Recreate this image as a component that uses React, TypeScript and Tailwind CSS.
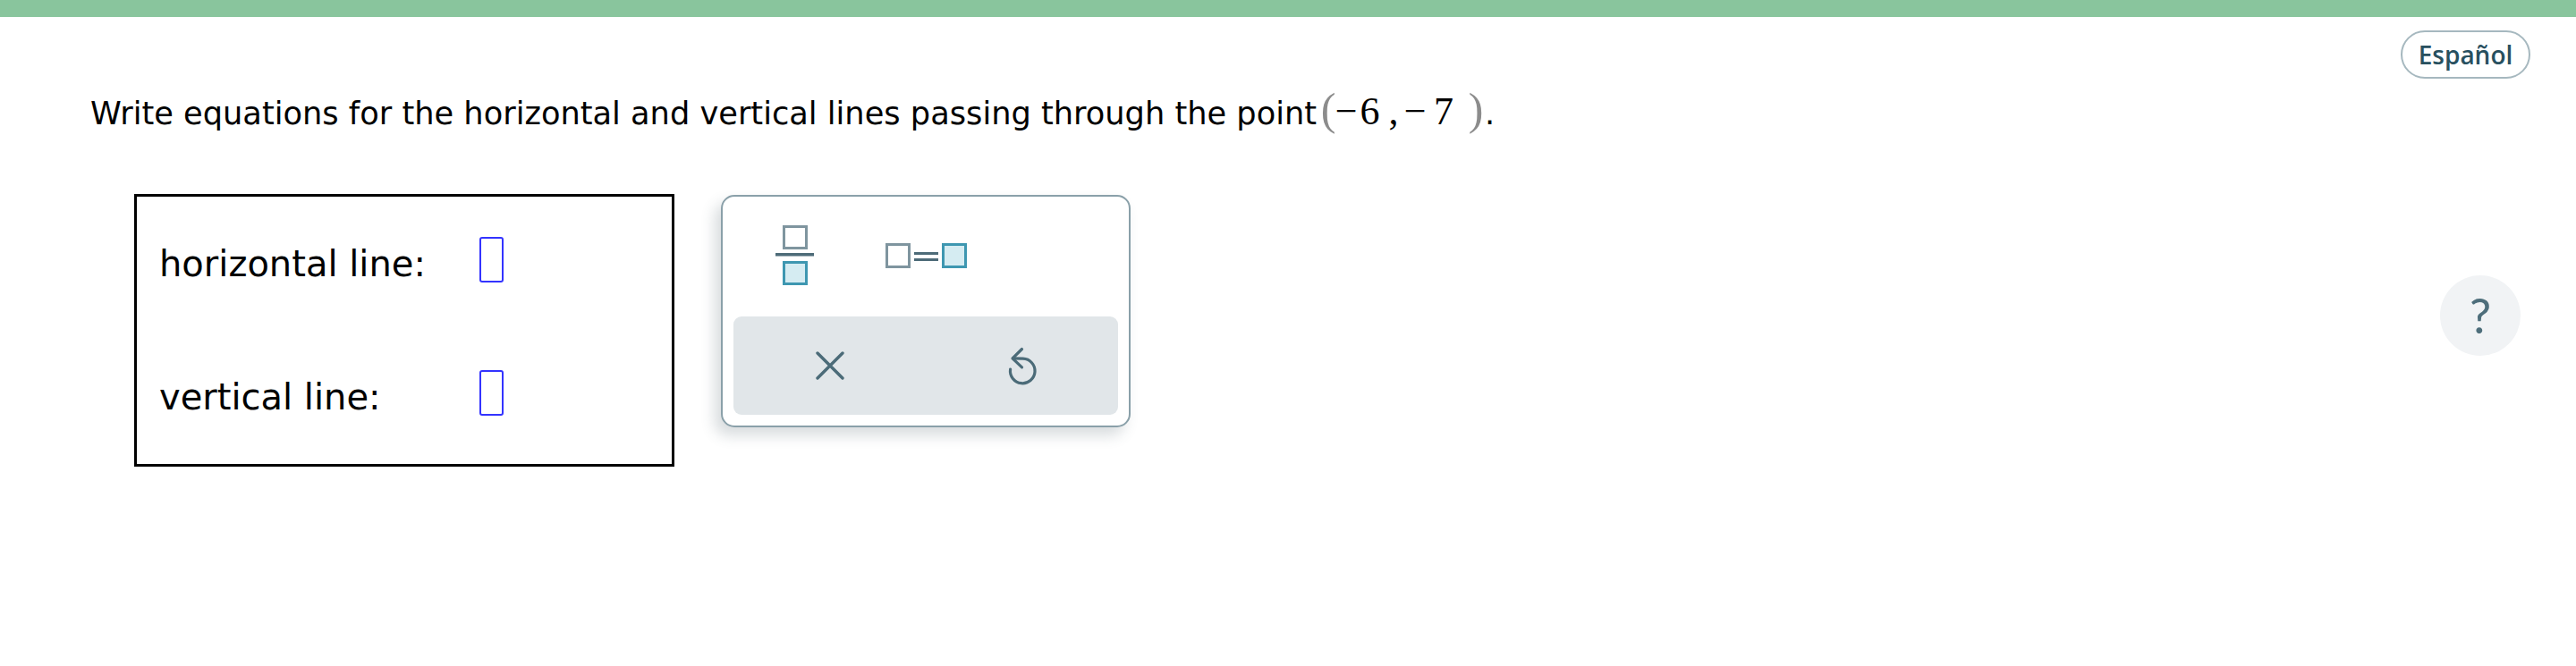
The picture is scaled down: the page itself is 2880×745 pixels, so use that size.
import React from "react";

const slate = "#4b6b78";
const MINUS = "\u2212";

function FractionIcon() {
  return (
    <svg width="43" height="67" viewBox="0 0 43 67">
      <rect x="9.5" y="1.5" width="25" height="24" fill="#ffffff" stroke="#7f959f" strokeWidth="3" />
      <rect x="0" y="31" width="43" height="3.5" fill="#4d6b78" />
      <rect x="9.5" y="41.5" width="25" height="24" fill="#d5ecf2" stroke="#3e97b1" strokeWidth="3" />
    </svg>
  );
}

function EqualsIcon() {
  return (
    <svg width="91" height="28" viewBox="0 0 91 28">
      <rect x="1.5" y="1.5" width="25" height="25" fill="#ffffff" stroke="#7f959f" strokeWidth="3" />
      <rect x="32" y="10" width="27" height="3" fill="#4d6b78" />
      <rect x="32" y="17" width="27" height="3" fill="#4d6b78" />
      <rect x="64.5" y="1.5" width="25" height="25" fill="#d5ecf2" stroke="#3e97b1" strokeWidth="3" />
    </svg>
  );
}

function XIcon() {
  return (
    <svg width="32" height="32" viewBox="0 0 32 32">
      <path d="M2 2 L30 30 M30 2 L2 30" stroke={slate} strokeWidth="3.4" strokeLinecap="round" fill="none" />
    </svg>
  );
}

function UndoIcon() {
  return (
    <svg width="36" height="46" viewBox="24 16 36 46">
      <path
        d="M28.6 43 A13.8 13.8 0 1 0 42.7 31.2 L31.5 30.8"
        stroke={slate}
        strokeWidth="3.2"
        strokeLinecap="round"
        strokeLinejoin="round"
        fill="none"
      />
      <path
        d="M41.5 20.5 L31 30.8 L41.5 40.8"
        stroke={slate}
        strokeWidth="3.2"
        strokeLinecap="round"
        strokeLinejoin="round"
        fill="none"
      />
    </svg>
  );
}

function AnswerRow({ label, className }: { label: string; className?: string }) {
  return (
    <div className={`flex items-end pl-[25px] ${className ?? ""}`}>
      <span className="w-[358px] pb-[1px] text-[40px] leading-none text-black">{label}</span>
      <span className="block h-[51px] w-[27px] rounded-[3px] border-2 border-[#3333ff]" />
    </div>
  );
}

export default function App() {
  return (
    <div className="min-h-[745px] w-full bg-white font-['DejaVu_Sans',Verdana,sans-serif]">
      <div className="h-[19px] bg-[#89c59d]" />
      <div className="flex">
        <div className="flex-1 pl-[101px]">
          <p className="mt-[85px] whitespace-nowrap text-[35.2px] leading-[46px] text-black">
            Write equations for the horizontal and vertical lines passing through the point
            <span className="font-['Liberation_Serif',serif] leading-[0]">
              <span className="inline-flex w-[26px] justify-center text-[50px] text-[#8c8c8c]">(</span>
              <span className="inline-flex w-[14px] justify-center text-[44px]">{MINUS}</span>
              <span className="inline-flex w-[39px] justify-center text-[44px]">6</span>
              <span className="inline-flex w-[14px] justify-center text-[44px]">,</span>
              <span className="inline-flex w-[34px] justify-center text-[44px]">{MINUS}</span>
              <span className="inline-flex w-[30px] justify-center text-[44px]">7</span>
              <span className="ml-[8px] inline-flex w-[26px] justify-center text-[50px] text-[#8c8c8c]">)</span>
            </span>
            <span className="inline-flex w-[5px] justify-center">.</span>
          </p>

          <div className="mt-[67px] ml-[49px] flex items-start">
            <div className="h-[305px] w-[604px] border-[3px] border-black pt-[45px]">
              <AnswerRow label="horizontal line:" />
              <AnswerRow label="vertical line:" className="mt-[98px]" />
            </div>

            <div className="ml-[52px] mt-[1px] flex h-[260px] w-[458px] flex-col rounded-[15px] border-2 border-[#8aa0a9] bg-white px-[12px] pb-[12px] shadow-[-7px_9px_16px_rgba(60,80,90,0.2)]">
              <div className="flex h-[134px] items-center pb-[3px]">
                <div className="flex w-[137px] justify-center">
                  <FractionIcon />
                </div>
                <div className="flex w-[157px] justify-center">
                  <EqualsIcon />
                </div>
              </div>
              <div className="grid h-[110px] grid-cols-2 rounded-[9px] bg-[#e1e6e9]">
                <div className="flex items-center justify-center">
                  <XIcon />
                </div>
                <div className="flex items-center justify-center">
                  <UndoIcon />
                </div>
              </div>
            </div>
          </div>
        </div>

        <div className="flex flex-col items-end pr-[51px]">
          <button className="mt-[15px] flex h-[54px] w-[145px] items-center justify-center rounded-full border-2 border-[#a6b8bf] bg-white font-['Open_Sans',sans-serif] text-[28px] font-semibold text-[#28505f]">
            Español
          </button>
          <button className="mt-[220px] mr-[11px] flex h-[90px] w-[90px] items-center justify-center rounded-full bg-[#f1f3f5] font-['Lato',sans-serif] text-[54px] font-normal leading-none text-[#4e6e7b]">
            ?
          </button>
        </div>
      </div>
    </div>
  );
}
